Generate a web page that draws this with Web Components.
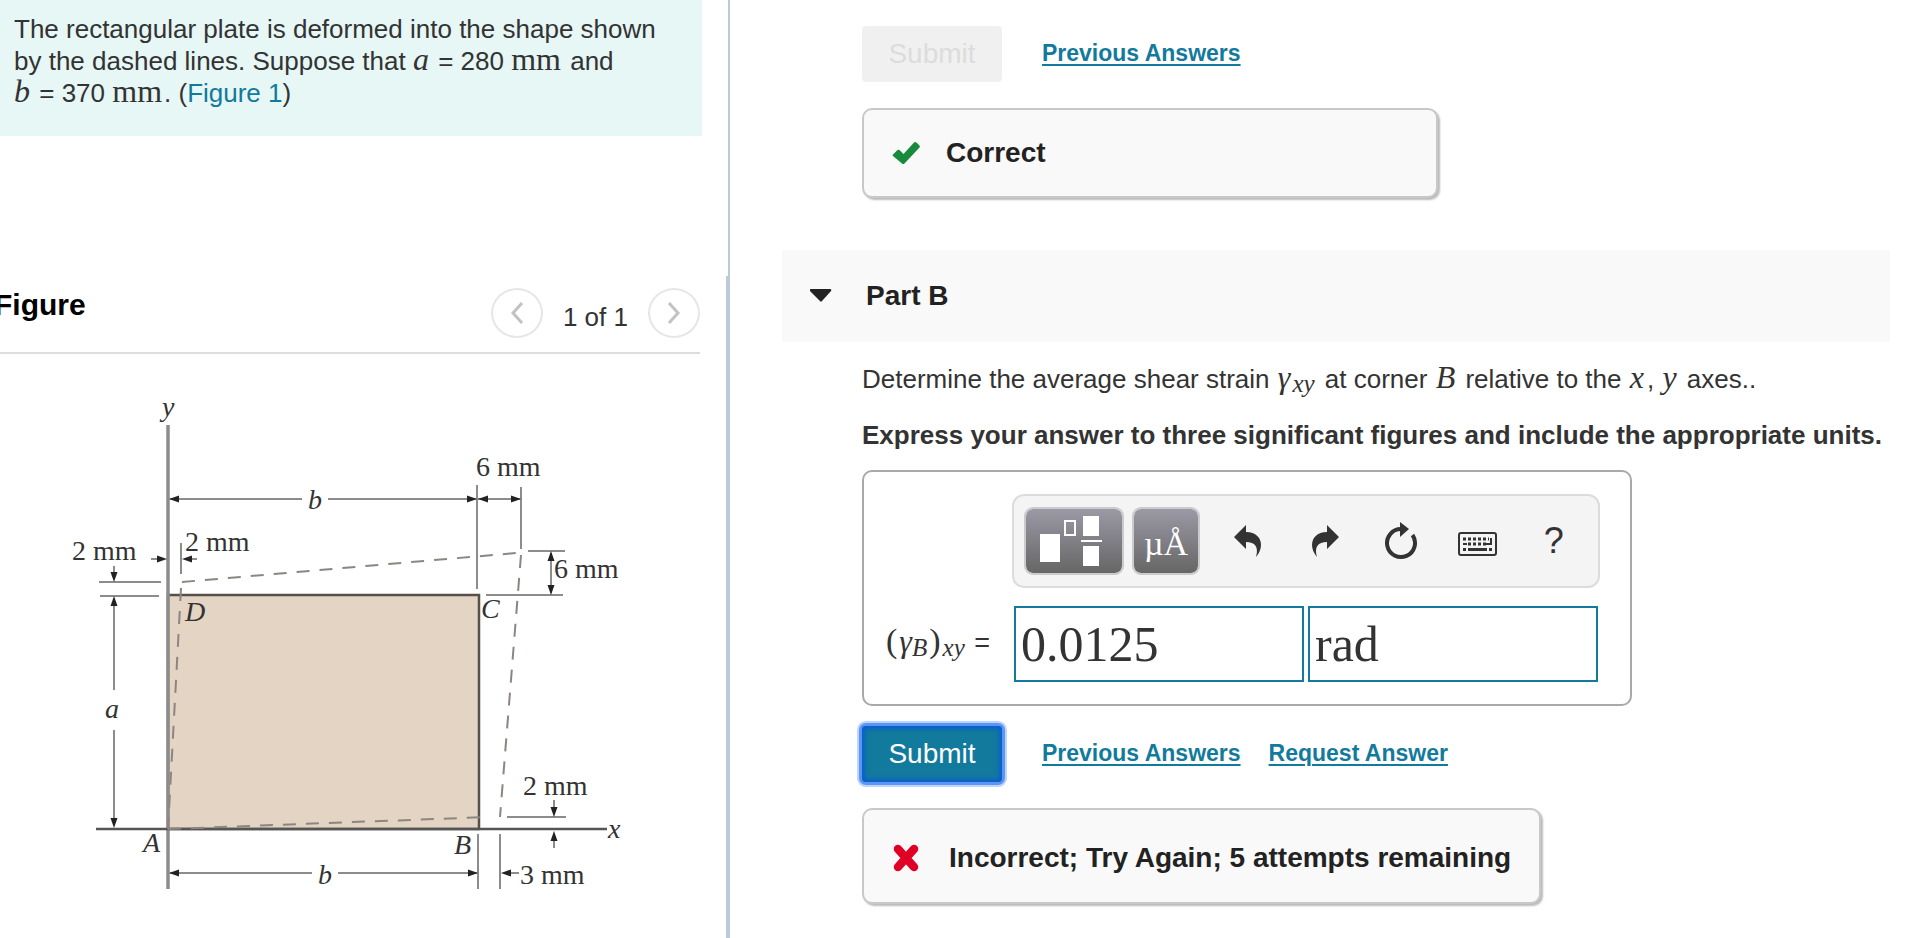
<!DOCTYPE html>
<html lang="en">
<head>
<meta charset="utf-8">
<title>Shear strain - Part B</title>
<style>
html, body {
  margin: 0;
  background: #fff;
}
body {
  --accent: #127a9c;
  --ink: #333;
  --rule: #b9cadb;
  --sans: "Liberation Sans", Arial, sans-serif;
  --serif: "Liberation Serif", "Times New Roman", serif;
  color: var(--ink);
  font: 26px/32px var(--sans);
}
a {
  color: var(--accent);
  text-decoration: none;
}
p {
  margin: 0;
}
.question {
  margin: 21px 0 24px 80px;
}
.instructions {
  margin: 0 -18px 19px 80px;
  font-weight: bold;
}
</style>
</head>
<body>
<split-page>
  <problem-statement slot="side">
    <p>The rectangular plate is deformed into the shape shown<br>
    by the dashed lines. Suppose that <math-text>a</math-text> = 280 <math-text upright>mm</math-text> and<br>
    <math-text>b</math-text> = 370 <math-text upright>mm</math-text>. (<a href="#figure">Figure 1</a>)</p>
  </problem-statement>
  <figure-viewer slot="side" id="figure" heading="Figure" position="1 of 1">
    <plate-diagram></plate-diagram>
  </figure-viewer>

  <submit-row disabled>
    <action-link>Previous Answers</action-link>
  </submit-row>
  <feedback-box kind="correct">Correct</feedback-box>
  <part-header>Part B</part-header>
  <p class="question">Determine the average shear strain <math-text spaced sub="xy">γ</math-text> at corner <math-text spaced>B</math-text> relative to the <math-text spaced>x</math-text>, <math-text spaced>y</math-text> axes..</p>
  <p class="instructions">Express your answer to three significant figures and include the appropriate units.</p>
  <answer-editor value="0.0125" unit="rad"></answer-editor>
  <submit-row focused>
    <action-link>Previous Answers</action-link>
    <action-link>Request Answer</action-link>
  </submit-row>
  <feedback-box kind="incorrect">Incorrect; Try Again; 5 attempts remaining</feedback-box>
</split-page>

<script>
'use strict'
class BaseElement extends HTMLElement {
  constructor() {
    super()
    this.attachShadow({mode: 'open'})
  }
  connectedCallback() {
    this.shadowRoot.innerHTML = this.render()
  }
  attr(name) {
    return this.getAttribute(name) || ''
  }
}

class SplitPage extends BaseElement {
  render() {
    return `
<style>
:host {
  display: grid;
  grid-template-columns: 730fr 1178fr;
  min-height: 100vh;
}
aside {
  display: flex;
  flex-direction: column;
  min-width: 0;
}
main {
  box-sizing: border-box;
  min-width: 0;
  padding: 26px 18px 0 52px;
}
</style>
<aside><slot name="side"></slot></aside>
<main><slot></slot></main>`
  }
}
window.customElements.define('split-page', SplitPage)

class MathText extends BaseElement {
  render() {
    const sub = this.attr('sub')
    return `
<style>
:host {
  margin-right: 2px;
  font-family: var(--serif);
  font-style: italic;
  font-size: 32px;
  line-height: 1px;
}
:host([upright]) {
  font-style: normal;
}
:host([spaced]) {
  margin: 0 3px 0 1px;
}
sub {
  margin-left: 2px;
  font-size: 25px;
  line-height: 1px;
  vertical-align: -4px;
}
</style>
<slot></slot>${sub ? `<sub>${sub}</sub>` : ''}`
  }
}
window.customElements.define('math-text', MathText)

class ProblemStatement extends BaseElement {
  render() {
    return `
<style>
:host {
  display: block;
  box-sizing: border-box;
  min-height: 276px;
  padding-right: 26px;
  border-right: 2px solid var(--rule);
}
div {
  box-sizing: border-box;
  height: 136px;
  padding: 13px 14px;
  background: #e6f7f6;
  white-space: nowrap;
}
</style>
<div><slot></slot></div>`
  }
}
window.customElements.define('problem-statement', ProblemStatement)

class FigureViewer extends BaseElement {
  render() {
    return `
<style>
:host {
  display: block;
  flex: 1;
  border-right: 4px solid var(--rule);
}
header {
  display: flex;
  align-items: center;
  gap: 20px;
  box-sizing: border-box;
  height: 78px;
  margin-right: 26px;
  padding-bottom: 2px;
  border-bottom: 2px solid #ddd;
}
h2 {
  flex: 1;
  margin: 0 0 16px -6px;
  color: #000;
  font-size: 30px;
}
span {
  padding-top: 8px;
}
button {
  display: grid;
  place-items: center;
  width: 52px;
  height: 50px;
  padding: 0;
  border: 2px solid #e6e6e6;
  border-radius: 50%;
  background: #fff;
}
path {
  fill: none;
  stroke: #c2c2c2;
  stroke-width: 3;
}
</style>
<header>
  <h2>${this.attr('heading')}</h2>
  <button aria-label="Previous figure"><svg width="14" height="22"><path d="M12 1 3 11 12 21"/></svg></button>
  <span>${this.attr('position')}</span>
  <button aria-label="Next figure"><svg width="14" height="22"><path d="M2 1 11 11 2 21"/></svg></button>
</header>
<slot></slot>`
  }
}
window.customElements.define('figure-viewer', FigureViewer)

// Draws an arrowhead with its tip at x, y
const head = (x, y, dir) => {
  const turn = {right: 0, down: 90, left: 180, up: 270}[dir]
  return `<path class="head" d="M0 0-10-3.500V3.500z" transform="translate(${x} ${y}) rotate(${turn})"/>`
}

class PlateDiagram extends BaseElement {
  render() {
    return `
<style>
:host {
  display: block;
}
svg {
  display: block;
  width: 100%;
  height: auto;
}
.dim {
  fill: none;
  stroke: #8c8c8c;
  stroke-width: 2;
}
.axis {
  fill: none;
  stroke: #8c8c8c;
  stroke-width: 3.500;
}
.plate {
  fill: #e3d4c4;
  stroke: #55504a;
  stroke-width: 2.500;
}
.dash {
  fill: none;
  stroke: #8b8680;
  stroke-width: 2;
  stroke-dasharray: 13 10;
}
.head {
  fill: #222;
}
text {
  fill: #333;
  font: 28px var(--serif);
}
.var {
  font-style: italic;
}
</style>
<svg viewBox="0 354 726 584" role="img" aria-label="Rectangular plate ABCD and its deformed shape">
  <rect class="plate" x="168" y="595" width="311" height="234"/>
  <path class="axis" d="M168 425V889"/>
  <path d="M96 829H607" stroke="#555" stroke-width="2.500"/>
  <path class="dash" d="M182 582 516 553"/>
  <path class="dash" d="M521 555 500 817"/>
  <path class="dash" d="M181 588 168 829"/>
  <path class="dash" d="M168 829 488 817"/>
  <path class="dim" d="M170 499H302M328 499H521M477 485V589M521 487V549"/>
  <path class="dim" d="M528 551H565M486 595H563M551 553V593"/>
  <path class="dim" d="M151 559H160M187 559H197M181 543V574M99 582H161M100 596H159"/>
  <path class="dim" d="M114 566V575M114 600V690M114 730V822"/>
  <path class="dim" d="M170 873H312M338 873H477M478 834V889M500 834V889M508 873H519"/>
  <path class="dim" d="M507 817H566M554 800V810M554 838V848"/>
  ${head(169, 499, 'left')}${head(477, 499, 'right')}${head(478, 499, 'left')}${head(521, 499, 'right')}
  ${head(551, 551, 'up')}${head(551, 595, 'down')}
  ${head(167, 559, 'right')}${head(182, 559, 'left')}
  ${head(114, 582, 'down')}${head(114, 596, 'up')}${head(114, 828, 'down')}
  ${head(169, 873, 'left')}${head(478, 873, 'right')}${head(501, 873, 'left')}
  ${head(554, 817, 'down')}${head(554, 831, 'up')}
  <text class="var" x="162" y="416">y</text>
  <text class="var" x="308" y="509">b</text>
  <text x="476" y="476">6 mm</text>
  <text x="72" y="560">2 mm</text>
  <text x="185" y="551">2 mm</text>
  <text x="554" y="578">6 mm</text>
  <text class="var" x="185" y="621">D</text>
  <text class="var" x="481" y="618">C</text>
  <text class="var" x="105" y="718">a</text>
  <text x="523" y="795">2 mm</text>
  <text class="var" x="608" y="838">x</text>
  <text class="var" x="143" y="852">A</text>
  <text class="var" x="454" y="854">B</text>
  <text class="var" x="318" y="884">b</text>
  <text x="520" y="884">3 mm</text>
</svg>`
  }
}
window.customElements.define('plate-diagram', PlateDiagram)

class ActionLink extends BaseElement {
  render() {
    return `
<style>
a {
  color: var(--accent);
  font-weight: bold;
  font-size: 23px;
  text-decoration: underline;
  text-decoration-thickness: 2px;
  text-underline-offset: 3px;
}
</style>
<a href="#"><slot></slot></a>`
  }
}
window.customElements.define('action-link', ActionLink)

class SubmitRow extends BaseElement {
  render() {
    return `
<style>
:host {
  display: flex;
  align-items: center;
  gap: 28px;
  height: 56px;
  margin-left: 80px;
}
button {
  width: 140px;
  height: 56px;
  margin-right: 12px;
  padding: 0;
  border: 0;
  border-radius: 4px;
  background: var(--accent);
  color: #fff;
  font: 28px var(--sans);
}
button:disabled {
  background: #f0f0f0;
  color: #dcdcdc;
}
::slotted(*) {
  padding-bottom: 3px;
}
:host([focused]) button {
  box-shadow: inset 0 0 4px 3px #0a5fcb, 0 0 0 3px #5b95f8, 0 0 0 5px #bdd5fb;
}
</style>
<button ${this.hasAttribute('disabled') ? 'disabled' : ''}>Submit</button>
<slot></slot>`
  }
}
window.customElements.define('submit-row', SubmitRow)

const feedbackIcons = {
  correct: '<path fill="#178a3c" d="M1 13.500 5.500 9Q6.500 8.300 7.500 9L11.500 13 22 1.500Q23.200.500 24.500 1.500L27.500 4.500Q28.300 5.500 27.500 6.500L12.500 22.500Q11.300 23.500 10 22.500L1 15Q.200 14.200 1 13.500z"/>',
  incorrect: '<path fill="none" stroke="#e00025" stroke-width="8.500" stroke-linecap="round" d="M6 3 22 21M22 3 6 21"/>'
}

class FeedbackBox extends BaseElement {
  render() {
    return `
<style>
:host {
  display: flex;
  align-items: center;
  gap: 26px;
  box-sizing: border-box;
  width: fit-content;
  height: 90px;
  margin: 26px 0 52px 80px;
  padding: 0 28px;
  border: 2px solid #c8c8c8;
  border-radius: 10px;
  background: #f9f9f9;
  box-shadow: 2px 2px 2px #bbb;
  color: #222;
  font-weight: bold;
  font-size: 28px;
}
:host([kind="correct"]) {
  min-width: 576px;
}
:host([kind="incorrect"]) {
  gap: 29px;
  height: 96px;
  margin-bottom: 0;
  padding-top: 4px;
}
svg {
  overflow: visible;
}
</style>
<svg width="28" height="24" aria-hidden="true">${feedbackIcons[this.attr('kind')]}</svg>
<span><slot></slot></span>`
  }
}
window.customElements.define('feedback-box', FeedbackBox)

class PartHeader extends BaseElement {
  render() {
    return `
<style>
:host {
  display: flex;
  align-items: center;
  gap: 34px;
  height: 92px;
  padding-left: 28px;
  background: #f9f9f9;
  color: #222;
}
h2 {
  margin: 0;
  font-size: 28px;
}
</style>
<svg width="22" height="14" aria-hidden="true"><path fill="#222" d="M1 0H20Q22 0 21 2L12 12Q11 13.500 10 12L0 2Q-1 0 1 0z"/></svg>
<h2><slot></slot></h2>`
  }
}
window.customElements.define('part-header', PartHeader)

class AnswerEditor extends BaseElement {
  render() {
    return `
<style>
:host {
  display: grid;
  grid-template-columns: 126px 588px;
  justify-content: end;
  align-items: center;
  row-gap: 18px;
  box-sizing: border-box;
  width: 770px;
  margin: 0 0 20px 80px;
  padding: 22px 30px 22px 20px;
  border: 2px solid #a9a9a9;
  border-radius: 10px;
}
.toolbar {
  grid-column: 2;
  display: flex;
  align-items: center;
  box-sizing: border-box;
  height: 94px;
  padding: 0 6px 0 10px;
  border: 2px solid #dcdcdc;
  border-radius: 12px;
  background: #f4f4f4;
}
button {
  display: grid;
  place-items: center;
  flex: 1;
  height: 68px;
  padding: 0;
  border: 0;
  background: none;
  color: var(--ink);
  font: 36px var(--sans);
}
button svg {
  fill: currentColor;
}
.dark {
  flex: none;
  width: 100px;
  margin-right: 8px;
  border: 2px solid #cbcbcb;
  border-radius: 9px;
  background: linear-gradient(#9b99a5, #666) padding-box;
  color: #fff;
  font: 34px var(--serif);
}
.units {
  width: 68px;
  margin-right: 10px;
  padding-top: 6px;
}
label {
  padding-bottom: 4px;
  font-size: 27px;
  white-space: nowrap;
}
i {
  font-family: var(--serif);
  font-size: 32px;
}
.paren {
  margin-right: 2px;
  font-style: normal;
  font-size: 34px;
}
sub {
  line-height: 1px;
  vertical-align: -4px;
}
sub i {
  margin-right: 2px;
  font-size: 25px;
}
.fields {
  display: grid;
  grid-template-columns: 1fr 1fr;
  gap: 4px;
  padding: 0 2px;
}
input {
  box-sizing: border-box;
  width: 100%;
  height: 76px;
  padding: 0 5px;
  border: 2px solid var(--accent);
  border-radius: 0;
  background: #fff;
  color: var(--ink);
  font: 50px var(--serif);
}
</style>
<div class="toolbar">
  <button class="dark" aria-label="Templates"><svg width="72" height="56">
    <path d="M2 21H22V49H2zM45 3H61V23H45zM45 33H61V53H45zM43 27H64V29H43z"/>
    <path fill="none" stroke="#fff" stroke-width="2" d="M27 8H37V22H27z"/>
  </svg></button>
  <button class="dark units">µÅ</button>
  <button aria-label="Undo"><svg width="28" height="32"><path d="M0 12 12 0V7C22 7 27 13 27 20Q27 26 22 32C25 22 21 17 12 17V24z"/></svg></button>
  <button aria-label="Redo"><svg width="28" height="32"><path d="M28 12 16 0V7C6 7 1 13 1 20Q1 26 6 32C3 22 7 17 16 17V24z"/></svg></button>
  <button aria-label="Reset"><svg width="34" height="38"><path fill="none" stroke="currentColor" stroke-width="4" d="M17 7A14 14 0 1 0 28.500 13"/><path d="M16 0 25 7 16 15z"/></svg></button>
  <button aria-label="Keyboard shortcuts"><svg width="39" height="30">
    <rect x="1" y="7" width="37" height="22" rx="2" fill="none" stroke="currentColor" stroke-width="2"/>
    <path fill="none" stroke="currentColor" stroke-width="3" stroke-dasharray="3 2" d="M5 13H31M10 18H29"/>
    <path d="M5 17H9V19H5zM5 22H8V25H5zM10 22H29V25H10zM31 22H34V25H31zM32 12H34V19H28V17H32z"/>
  </svg></button>
  <button aria-label="Help">?</button>
</div>
<label for="value"><i class="paren">(</i><i>γ</i><sub><i>B</i></sub><i class="paren">)</i><sub><i>xy</i></sub> =</label>
<div class="fields">
  <input id="value" value="${this.attr('value')}">
  <input aria-label="Units" value="${this.attr('unit')}">
</div>`
  }
}
window.customElements.define('answer-editor', AnswerEditor)
</script>
</body>
</html>
